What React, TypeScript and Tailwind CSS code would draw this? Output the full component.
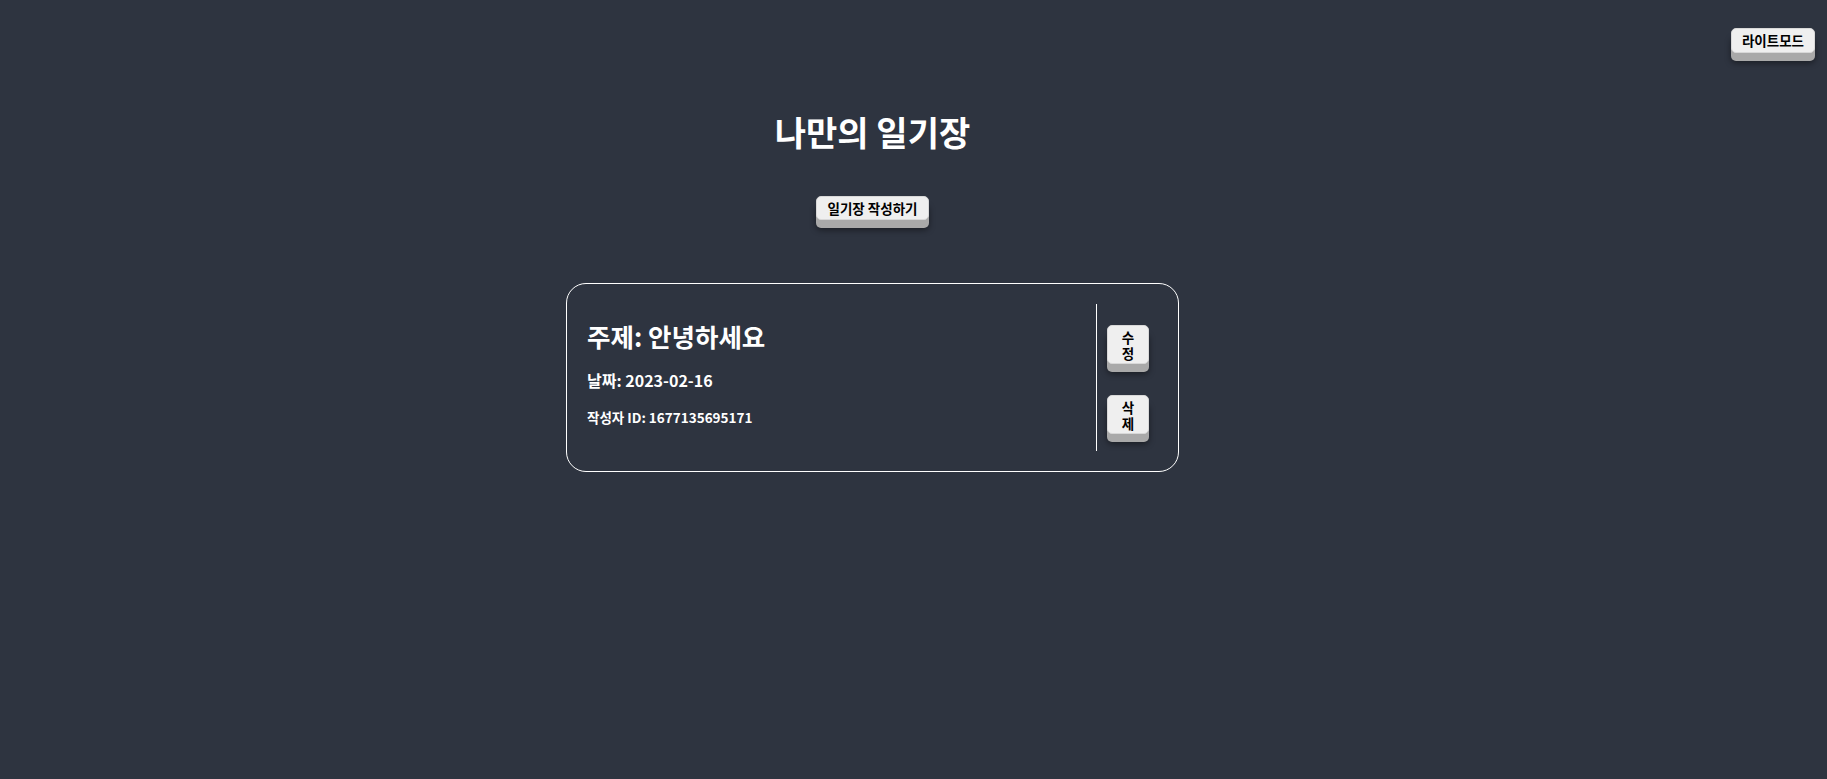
import React from "react";

const font = { fontFamily: '"Noto Sans CJK KR", "Noto Sans", sans-serif' };

function KeyButton({ children, className = "" }: { children: React.ReactNode; className?: string }) {
  return (
    <button
      className={
        "bg-[#efefef] text-black font-bold text-[13.5px] leading-[16px] rounded-[5px] border border-[#d8d8d8] shadow-[0_8px_0_#a9a9a9,0_10px_6px_rgba(0,0,0,0.45)] " +
        className
      }
    >
      {children}
    </button>
  );
}

export default function App() {
  return (
    <div className="relative min-h-screen bg-[#2e3440] text-white" style={font}>
      <div className="absolute top-[27px] right-[12px]">
        <KeyButton className="w-[84px] h-[25px]">라이트모드</KeyButton>
      </div>
      <div className="w-[1745px] flex flex-col items-center pt-[107px]">
        <h1 className="text-[34px] leading-[50px] font-bold">나만의 일기장</h1>
        <KeyButton className="mt-[39px] w-[113px] h-[24px]">일기장 작성하기</KeyButton>
        <div className="mt-[63px] w-[613px] h-[189px] border border-white rounded-[20px] p-[20px] flex">
          <div className="flex-1 pt-[15px]">
            <div className="text-[25.5px] leading-[34px] font-bold">주제: 안녕하세요</div>
            <div className="mt-[16px] text-[16px] leading-[22px] font-bold">날짜: 2023-02-16</div>
            <div className="mt-[17px] text-[13.5px] leading-[18px] font-bold">작성자 ID: 1677135695171</div>
          </div>
          <div className="border-l border-white pl-[10px] pr-[9px] pt-[21px] flex flex-col gap-[31px]">
            <KeyButton className="w-[42px] h-[39px] break-all px-[13px] leading-[15px]">수정</KeyButton>
            <KeyButton className="w-[42px] h-[39px] break-all px-[13px] leading-[15px]">삭제</KeyButton>
          </div>
        </div>
      </div>
    </div>
  );
}
